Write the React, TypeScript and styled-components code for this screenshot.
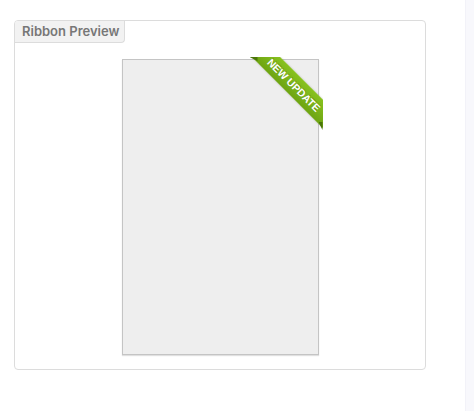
import React from 'react';
import styled, { createGlobalStyle } from 'styled-components';

const GlobalStyle = createGlobalStyle`
  html, body {
    margin: 0;
    padding: 0;
    background: #ffffff;
  }
  body {
    font-family: Inter, 'Liberation Sans', Arial, sans-serif;
  }
`;

const Shell = styled.div`
  display: flex;
  height: 100vh;
`;

const Main = styled.main`
  flex: 1;
  padding: 20px 0 0 14px;
`;

const SideRail = styled.div`
  width: 8px;
  background: #f8f8fc;
  border-left: 1px solid #f2f2f8;
`;

const PreviewBox = styled.section`
  box-sizing: border-box;
  width: 412px;
  height: 350px;
  border: 1px solid #dcdcdc;
  border-radius: 4px;
  display: flex;
  flex-direction: column;
`;

const TabLabel = styled.div`
  box-sizing: border-box;
  align-self: flex-start;
  width: 110px;
  height: 22px;
  padding-left: 7px;
  background: #f2f2f2;
  border-right: 1px solid #dcdcdc;
  border-bottom: 1px solid #dcdcdc;
  border-radius: 3px 0 4px 0;
  color: #777777;
  font-size: 13px;
  font-weight: 600;
  line-height: 21px;
  white-space: nowrap;
`;

const Stage = styled.div`
  flex: 1;
  display: flex;
  justify-content: center;
  padding-top: 16px;
`;

const Page = styled.div`
  box-sizing: border-box;
  position: relative;
  width: 197px;
  height: 296px;
  background: #eeeeee;
  border: 1px solid #c4c4c4;
  box-shadow: 0 1px 1px rgba(0, 0, 0, 0.12);
`;

const RibbonWrap = styled.div`
  position: absolute;
  top: -3px;
  right: -5px;
  width: 73px;
  height: 73px;
  overflow: hidden;

  &::before,
  &::after {
    content: '';
    position: absolute;
    z-index: 1;
    background: #4a7608;
  }
  &::before {
    left: 0;
    top: 0;
    width: 8px;
    height: 4px;
    clip-path: polygon(0 0, 100% 0, 100% 100%);
  }
  &::after {
    right: 0;
    bottom: 0;
    width: 4px;
    height: 8px;
    clip-path: polygon(0 0, 100% 0, 100% 100%);
  }
`;

const Ribbon = styled.div`
  position: absolute;
  left: -17px;
  top: 18px;
  width: 122px;
  height: 20px;
  transform: rotate(45deg);
  background: linear-gradient(#88c21f, #6ea412);
  box-shadow: 0 0 2px rgba(0, 0, 0, 0.25);
  color: #ffffff;
  font-family: 'Liberation Sans', Arial, sans-serif;
  font-size: 10.5px;
  font-weight: 700;
  line-height: 20px;
  text-align: center;
  text-shadow: 0 -1px 0 rgba(0, 0, 0, 0.2);
`;

export default function App() {
  return (
    <>
      <GlobalStyle />
      <Shell>
        <Main>
          <PreviewBox>
            <TabLabel>Ribbon Preview</TabLabel>
            <Stage>
              <Page>
                <RibbonWrap>
                  <Ribbon>NEW UPDATE</Ribbon>
                </RibbonWrap>
              </Page>
            </Stage>
          </PreviewBox>
        </Main>
        <SideRail />
      </Shell>
    </>
  );
}
